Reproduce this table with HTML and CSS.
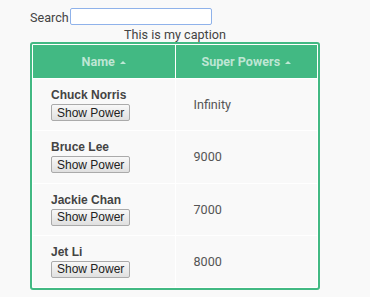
FILE: index.html
```
<!DOCTYPE html>
<html>
<head>
<meta charset="utf-8">
<link rel="stylesheet" href="styles.css">
</head>
<body>
<div class="app">
  <form class="search">
    <label class="search-label" for="q">Search</label>
    <input class="search-input" id="q" type="text">
  </form>
  <table class="grid">
    <caption class="grid-caption">This is my caption</caption>
    <thead>
      <tr>
        <th class="grid-head">Name<span class="arrow"></span></th>
        <th class="grid-head">Super Powers<span class="arrow"></span></th>
      </tr>
    </thead>
    <tbody>
      <tr>
        <td class="grid-cell"><div class="hero"><span class="hero-name">Chuck Norris</span><button class="power-btn" type="button">Show Power</button></div></td>
        <td class="grid-cell">Infinity</td>
      </tr>
      <tr>
        <td class="grid-cell"><div class="hero"><span class="hero-name">Bruce Lee</span><button class="power-btn" type="button">Show Power</button></div></td>
        <td class="grid-cell">9000</td>
      </tr>
      <tr>
        <td class="grid-cell"><div class="hero"><span class="hero-name">Jackie Chan</span><button class="power-btn" type="button">Show Power</button></div></td>
        <td class="grid-cell">7000</td>
      </tr>
      <tr>
        <td class="grid-cell"><div class="hero"><span class="hero-name">Jet Li</span><button class="power-btn" type="button">Show Power</button></div></td>
        <td class="grid-cell">8000</td>
      </tr>
    </tbody>
  </table>
</div>
</body>
</html>
```
FILE: styles.css
```
html, body {
  margin: 0;
  padding: 0;
  background: #f9f9f9;
}
body {
  font-family: Roboto, "Liberation Sans", Arial, sans-serif;
  font-size: 12.6px;
  color: #444;
}
.app {
  padding: 8px 0 0 30px;
}
.search {
  display: flex;
  align-items: center;
  height: 19px;
  margin: 0;
}
.search-label {
  line-height: 15px;
  margin-right: 1px;
}
.search-input {
  box-sizing: border-box;
  width: 142px;
  height: 17px;
  align-self: flex-start;
  margin: 0;
  padding: 0 2px;
  border: 1px solid #8fb2ea;
  border-radius: 2px;
  background: #fff;
  font-family: "Liberation Sans", Arial, sans-serif;
  font-size: 12px;
  outline: none;
}
.grid {
  border: 2px solid #42b983;
  border-radius: 3px;
  background: #fff;
  border-spacing: 1.5px;
}
.grid-caption {
  line-height: 15px;
  color: #444;
}
.grid-head {
  box-sizing: border-box;
  width: 141.5px;
  height: 33px;
  padding: 0 18px;
  background: #42b983;
  color: rgba(255, 255, 255, 0.66);
  font-weight: bold;
  line-height: 15px;
  text-align: center;
}
.arrow {
  display: inline-block;
  vertical-align: middle;
  width: 0;
  height: 0;
  margin-left: 5px;
  opacity: 0.66;
  border-left: 3.5px solid transparent;
  border-right: 3.5px solid transparent;
  border-bottom: 3.5px solid #fff;
}
.grid-cell {
  box-sizing: border-box;
  width: 141.5px;
  height: 51.25px;
  padding: 0 18px;
  background: #f9f9f9;
  line-height: 15px;
  color: #555;
}
.hero {
  display: flex;
  flex-direction: column;
  align-items: flex-start;
}
.hero-name {
  font-family: "Liberation Sans", Arial, sans-serif;
  font-weight: bold;
  font-size: 12px;
  line-height: 15px;
  color: #444;
}
.power-btn {
  box-sizing: border-box;
  height: 17px;
  margin: 1px 0 0 0;
  padding: 0 5px;
  border: 1px solid #aaa;
  border-radius: 2px;
  background: linear-gradient(#f8f8f8, #e0e0e0);
  font-family: "Liberation Sans", Arial, sans-serif;
  font-size: 12px;
  line-height: 14px;
  color: #222;
}
```
